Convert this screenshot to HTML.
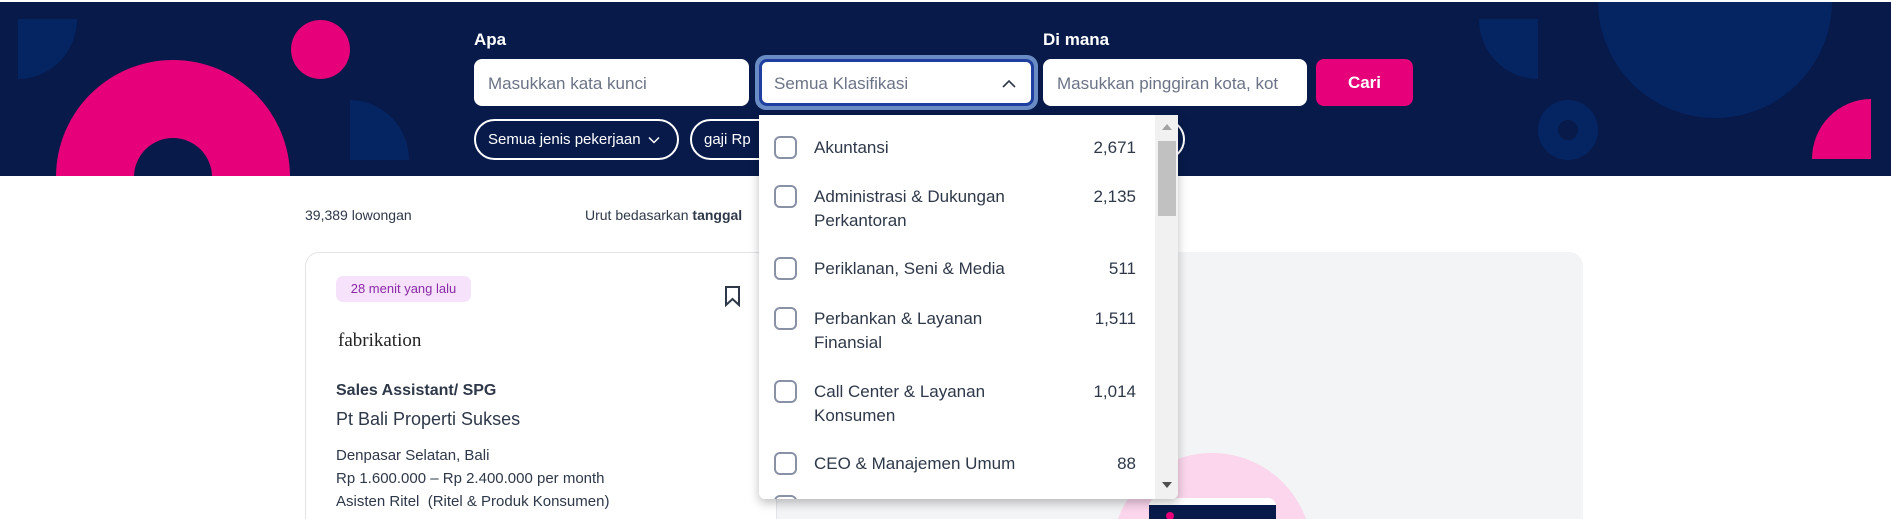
<!DOCTYPE html>
<html style="width:1891px;height:519px;overflow:hidden"><head><meta charset="utf-8"><style>
*{box-sizing:border-box;margin:0;padding:0}
body{width:1891px;height:519px;overflow:hidden;background:#fff;font-family:"Liberation Sans",sans-serif;position:relative;color:#2e3849}
.a{position:absolute}
.hdr{left:0;top:2px;width:1891px;height:174px;background:#071a4a;overflow:hidden}
.lbl{color:#fff;font-weight:bold;font-size:17px}
.inp{background:#fff;border-radius:8px;height:47px;top:59px;font-size:17px;color:#6b7386;padding:15px 14px;white-space:nowrap;overflow:hidden}
.pill{top:119px;height:41px;border:2px solid #fff;border-radius:21px;color:#fff;font-size:15px;padding:10px 12px;white-space:nowrap}
.dd{left:759px;top:115px;width:419px;height:384px;background:#fff;border-radius:0 0 6px 6px;box-shadow:0 4px 10px rgba(0,0,0,.25);overflow:hidden}
.row{position:absolute;left:0;width:396px;font-size:17px;color:#2e3849;line-height:24px}
.cb{position:absolute;left:15px;top:8px;width:23px;height:23px;border:2px solid #8891a6;border-radius:6px}
.t{position:absolute;left:55px;top:8px}
.n{position:absolute;right:19px;top:8px}
.sm{font-size:14px;color:#2e3849}
</style></head><body>
<div class="a hdr">
 <div class="a" style="left:18px;top:17px;width:59px;height:60px;background:#052462;border-bottom-right-radius:59px 60px"></div>
 <div class="a" style="left:56px;top:58px;width:234px;height:234px;border-radius:50%;background:#e6007a"></div>
 <div class="a" style="left:134px;top:136px;width:78px;height:78px;border-radius:50%;background:#071a4a"></div>
 <div class="a" style="left:291px;top:18px;width:59px;height:59px;border-radius:50%;background:#e6007a"></div>
 <div class="a" style="left:350px;top:98px;width:59px;height:60px;background:#052462;border-top-right-radius:59px 60px"></div>
 <div class="a" style="left:1479px;top:17px;width:59px;height:60px;background:#052462;border-bottom-left-radius:59px 60px"></div>
 <div class="a" style="left:1598px;top:-118px;width:234px;height:234px;border-radius:50%;background:#052462"></div>
 <div class="a" style="left:1538px;top:98px;width:60px;height:60px;border-radius:50%;border:20px solid #052462"></div>
 <div class="a" style="left:1812px;top:97px;width:59px;height:60px;background:#e6007a;border-top-left-radius:59px 60px"></div>
</div>
<div class="a lbl" style="left:474px;top:30px">Apa</div>
<div class="a lbl" style="left:1043px;top:30px">Di mana</div>
<div class="a inp" style="left:474px;width:275px">Masukkan kata kunci</div>
<div class="a" style="left:755px;top:55px;width:283px;height:55px;border-radius:11px;background:#6a8cc4"></div>
<div class="a inp" style="left:759px;width:275px;border:3px solid #1f3fa0;padding:12px 12px">Semua Klasifikasi
 <svg class="a" style="right:14px;top:17px" width="16" height="10" viewBox="0 0 16 10"><path d="M2 8 L8 2 L14 8" fill="none" stroke="#2e3849" stroke-width="1.6"/></svg></div>
<div class="a inp" style="left:1043px;width:264px">Masukkan pinggiran kota, kot</div>
<div class="a" style="left:1316px;top:59px;width:97px;height:47px;border-radius:8px;background:#e6007a;color:#fff;font-weight:bold;font-size:17px;text-align:center;line-height:47px">Cari</div>
<div class="a pill" style="left:474px;width:205px">Semua jenis pekerjaan <svg width="12" height="8" viewBox="0 0 12 8" style="margin-left:3px"><path d="M1 1.5 L6 6.5 L11 1.5" fill="none" stroke="#fff" stroke-width="1.5"/></svg></div>
<div class="a pill" style="left:690px;width:120px">gaji Rp</div>
<div class="a pill" style="left:1100px;width:85px"></div>
<div class="a sm" style="left:305px;top:207px">39,389 lowongan</div>
<div class="a sm" style="left:585px;top:207px">Urut bedasarkan <b>tanggal</b></div>
<div class="a" style="left:776px;top:252px;width:807px;height:267px;background:#f3f4f6;border-radius:14px 14px 0 0;overflow:hidden">
 <div class="a" style="left:336px;top:201px;width:200px;height:200px;border-radius:50%;background:#fbd6ec"></div>
 <div class="a" style="left:373px;top:246px;width:127px;height:30px;background:#fff;border-radius:8px 8px 0 0"></div>
 <div class="a" style="left:373px;top:253px;width:127px;height:20px;background:#071a4a"></div>
 <div class="a" style="left:390px;top:260px;width:8px;height:8px;border-radius:50%;background:#e6007a"></div>
</div>
<div class="a" style="left:305px;top:252px;width:472px;height:267px;border:1px solid #e2e4e9;border-bottom:none;border-radius:14px 14px 0 0;background:#fff"></div>
<div class="a" style="left:336px;top:276px;width:135px;height:26px;border-radius:7px;background:#f6e3fb;color:#8a2aa6;font-size:13px;text-align:center;line-height:26px">28 menit yang lalu</div>
<svg class="a" style="left:724px;top:285px" width="17" height="22" viewBox="0 0 17 22"><path d="M2 2 H15 V20 L8.5 14 L2 20 Z" fill="none" stroke="#2e3849" stroke-width="2"/></svg>
<div class="a" style="left:338px;top:330px;font-family:'Liberation Serif',serif;font-size:19px;color:#222">fabrikation</div>
<div class="a" style="left:336px;top:382px;font-size:16px;font-weight:bold;color:#2e3849">Sales Assistant/ SPG</div>
<div class="a" style="left:336px;top:409px;font-size:18px;color:#2e3849">Pt Bali Properti Sukses</div>
<div class="a sm" style="left:336px;top:447px;font-size:15px">Denpasar Selatan, Bali</div>
<div class="a sm" style="left:336px;top:470px;font-size:15px">Rp 1.600.000 – Rp 2.400.000 per month</div>
<div class="a sm" style="left:336px;top:493px;font-size:15px">Asisten Ritel &nbsp;(Ritel &amp; Produk Konsumen)</div>
<div class="a dd">
 <div class="row" style="top:13px"><div class="cb"></div><div class="t">Akuntansi</div><div class="n">2,671</div></div>
 <div class="row" style="top:62px"><div class="cb"></div><div class="t">Administrasi &amp; Dukungan<br>Perkantoran</div><div class="n">2,135</div></div>
 <div class="row" style="top:134px"><div class="cb"></div><div class="t">Periklanan, Seni &amp; Media</div><div class="n">511</div></div>
 <div class="row" style="top:184px"><div class="cb"></div><div class="t">Perbankan &amp; Layanan<br>Finansial</div><div class="n">1,511</div></div>
 <div class="row" style="top:257px"><div class="cb"></div><div class="t">Call Center &amp; Layanan<br>Konsumen</div><div class="n">1,014</div></div>
 <div class="row" style="top:329px"><div class="cb"></div><div class="t">CEO &amp; Manajemen Umum</div><div class="n">88</div></div>
 <div class="row" style="top:372px"><div class="cb"></div></div>
 <div class="a" style="left:396px;top:0;width:23px;height:384px;background:#f1f1f1"></div>
 <div class="a" style="left:399px;top:26px;width:18px;height:75px;background:#c1c1c1"></div>
 <svg class="a" style="left:402px;top:8px" width="12" height="8"><path d="M1 7 L6 1 L11 7Z" fill="#a3a3a3"/></svg>
 <svg class="a" style="left:402px;top:366px" width="12" height="8"><path d="M1 1 L6 7 L11 1Z" fill="#505050"/></svg>
</div>
</body></html>
